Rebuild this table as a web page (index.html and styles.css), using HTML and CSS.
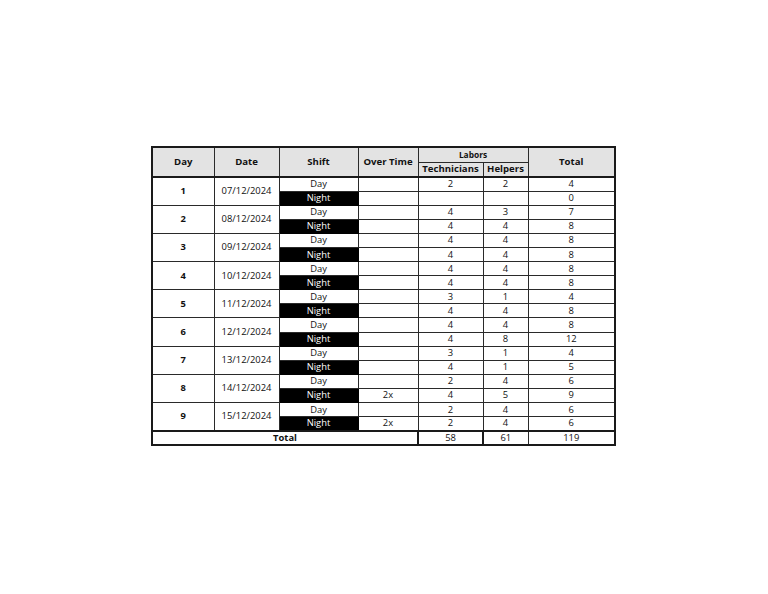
FILE: index.html
```html
<!DOCTYPE html>
<html>
<head>
<meta charset="utf-8">
<link rel="stylesheet" href="styles.css">
</head>
<body>
<div class="page">
<table class="sheet">
  <colgroup>
    <col class="c-day"><col class="c-date"><col class="c-shift"><col class="c-ot"><col class="c-tech"><col class="c-help"><col class="c-total">
  </colgroup>
  <thead>
    <tr class="h1">
      <th rowspan="2" class="big">Day</th>
      <th rowspan="2" class="big">Date</th>
      <th rowspan="2" class="big">Shift</th>
      <th rowspan="2" class="big">Over Time</th>
      <th colspan="2" class="small">Labors</th>
      <th rowspan="2" class="big">Total</th>
    </tr>
    <tr class="h2">
      <th class="big">Technicians</th>
      <th class="big">Helpers</th>
    </tr>
  </thead>
  <tbody>
    <tr class="d"><td rowspan="2" class="b">1</td><td rowspan="2">07/12/2024</td><td>Day</td><td></td><td>2</td><td>2</td><td>4</td></tr>
    <tr class="n"><td class="night">Night</td><td></td><td></td><td></td><td>0</td></tr>
    <tr class="d"><td rowspan="2" class="b">2</td><td rowspan="2">08/12/2024</td><td>Day</td><td></td><td>4</td><td>3</td><td>7</td></tr>
    <tr class="n"><td class="night">Night</td><td></td><td>4</td><td>4</td><td>8</td></tr>
    <tr class="d"><td rowspan="2" class="b">3</td><td rowspan="2">09/12/2024</td><td>Day</td><td></td><td>4</td><td>4</td><td>8</td></tr>
    <tr class="n"><td class="night">Night</td><td></td><td>4</td><td>4</td><td>8</td></tr>
    <tr class="d"><td rowspan="2" class="b">4</td><td rowspan="2">10/12/2024</td><td>Day</td><td></td><td>4</td><td>4</td><td>8</td></tr>
    <tr class="n"><td class="night">Night</td><td></td><td>4</td><td>4</td><td>8</td></tr>
    <tr class="d"><td rowspan="2" class="b">5</td><td rowspan="2">11/12/2024</td><td>Day</td><td></td><td>3</td><td>1</td><td>4</td></tr>
    <tr class="n"><td class="night">Night</td><td></td><td>4</td><td>4</td><td>8</td></tr>
    <tr class="d"><td rowspan="2" class="b">6</td><td rowspan="2">12/12/2024</td><td>Day</td><td></td><td>4</td><td>4</td><td>8</td></tr>
    <tr class="n"><td class="night">Night</td><td></td><td>4</td><td>8</td><td>12</td></tr>
    <tr class="d"><td rowspan="2" class="b">7</td><td rowspan="2">13/12/2024</td><td>Day</td><td></td><td>3</td><td>1</td><td>4</td></tr>
    <tr class="n"><td class="night">Night</td><td></td><td>4</td><td>1</td><td>5</td></tr>
    <tr class="d"><td rowspan="2" class="b">8</td><td rowspan="2">14/12/2024</td><td>Day</td><td></td><td>2</td><td>4</td><td>6</td></tr>
    <tr class="n"><td class="night">Night</td><td>2x</td><td>4</td><td>5</td><td>9</td></tr>
    <tr class="d"><td rowspan="2" class="b">9</td><td rowspan="2">15/12/2024</td><td>Day</td><td></td><td>2</td><td>4</td><td>6</td></tr>
    <tr class="n"><td class="night">Night</td><td>2x</td><td>2</td><td>4</td><td>6</td></tr>
  </tbody>
  <tfoot>
    <tr class="tot"><td colspan="4" class="b">Total</td><td>58</td><td>61</td><td>119</td></tr>
  </tfoot>
</table>
</div>
</body>
</html>
```
FILE: styles.css
```css
html, body {
  margin: 0;
  padding: 0;
  background: #ffffff;
}
.page {
  padding: 146px 0 0 151px;
}
.sheet {
  border-collapse: collapse;
  table-layout: fixed;
  width: 465px;
  border: 2px solid #1a1a1a;
  font-family: "Open Sans", "Noto Sans", sans-serif;
  font-size: 9.4px;
  color: #111;
}
.c-day { width: 62px; }
.c-date { width: 65px; }
.c-shift { width: 79px; }
.c-ot { width: 60px; }
.c-tech { width: 65px; }
.c-help { width: 45px; }
.c-total { width: 87px; }

.sheet th, .sheet td {
  border: 1px solid #2a2a2a;
  padding: 0;
  text-align: center;
  vertical-align: middle;
  line-height: 12px;
  overflow: hidden;
  white-space: nowrap;
}
.sheet thead th {
  background: #e3e3e3;
  font-weight: 700;
}
.sheet thead tr.h2 th,
.sheet thead tr.h1 th[rowspan] {
  border-bottom: 2px solid #1a1a1a;
}
.sheet th.big { font-size: 9.6px; }
.sheet th.small { font-size: 8.4px; }
.h1 { height: 15px; }
.h2 { height: 15px; }
.sheet tbody tr { height: 14.1px; }
.sheet td.b { font-weight: 700; }
.sheet td.night {
  background: #000000;
  color: #ffffff;
  border-color: #000;
}
.sheet tfoot tr.tot { height: 14.5px; }
.sheet tfoot td {
  border-top: 2px solid #1a1a1a;
}
.sheet tfoot td:first-child,
.sheet tfoot td:nth-child(2) { border-right: 2px solid #1a1a1a; }
```
